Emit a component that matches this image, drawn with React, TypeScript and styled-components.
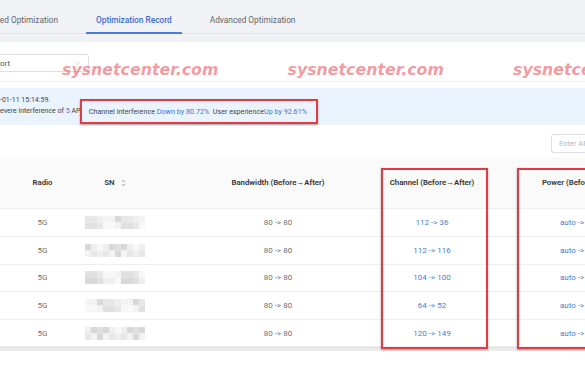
import styled, { createGlobalStyle } from "styled-components";
import { ChevronDown } from "lucide-react";

const GlobalStyle = createGlobalStyle`
  html, body { margin: 0; padding: 0; background: #fff; }
  body { font-family: Roboto, "Liberation Sans", sans-serif; }
`;

const Page = styled.div`
  position: relative;
  width: 585px;
  height: 390px;
  overflow: hidden;
  background: #fff;
`;

const TabBar = styled.div`
  width: 720px;
  height: 42px;
  background: #f0f2f5;
`;

const TabList = styled.div`
  display: flex;
  gap: 18px;
  height: 34px;
  box-sizing: border-box;
  border-bottom: 1px solid #e2e4e8;
`;

const Tab = styled.div<{ $active?: boolean; $clip?: boolean }>`
  display: flex;
  justify-content: flex-end;
  align-items: flex-start;
  box-sizing: border-box;
  height: 34px;
  margin-bottom: -1px;
  padding: 15px 10px 0;
  font-size: 8.3px;
  line-height: 10px;
  white-space: nowrap;
  color: ${(p) => (p.$active ? "#3d6dd2" : "#62666c")};
  font-weight: ${(p) => (p.$active ? 500 : 400)};
  border-bottom: 2px solid ${(p) => (p.$active ? "#4a7be0" : "transparent")};
  ${(p) => p.$clip && "width: 68px; flex-shrink: 0; overflow: hidden;"}
`;

const Content = styled.div`
  width: 720px;
  background: #fff;
`;

const FilterRow = styled.div`
  padding: 12px 0 9px;
  border-bottom: 1px solid #eeeff1;
`;

const Select = styled.div`
  width: 95px;
  height: 18px;
  margin-left: -6px;
  box-sizing: border-box;
  border: 1px solid #dcdfe6;
  border-radius: 3px;
  display: flex;
  align-items: center;
  justify-content: space-between;
  padding: 0 6px 0 5px;
  font-size: 8px;
  color: #555;
`;

const InfoBar = styled.div`
  margin-top: 6px;
  background: #eaf3fe;
  padding: 6.5px 0 8.5px;
  font-size: 7px;
  line-height: 11px;
  color: #444;
  white-space: nowrap;
`;

const Blue = styled.span`
  color: #3f74d6;
`;

const Callout = styled.span`
  display: inline-block;
  vertical-align: middle;
  margin: -7px 0 -7px -6px;
  padding: 5px 9px 5px 7px;
  background: #eaf3fe;
  border: 2px solid #df3d43;
  box-shadow: 0 1px 2px rgba(0, 0, 0, 0.35);
  font-size: 7.2px;
  line-height: 11px;
`;

const SearchRow = styled.div`
  display: flex;
  justify-content: flex-end;
  padding: 9px 19px 0 0;
`;

const Search = styled.div`
  width: 150px;
  height: 19px;
  box-sizing: border-box;
  border: 1px solid #dcdfe6;
  border-radius: 3px;
  padding-left: 7px;
  display: flex;
  align-items: center;
  font-size: 7.5px;
  color: #b5b8bd;
`;

const TableWrap = styled.div`
  position: relative;
  margin-top: 4px;
`;

const Row = styled.div<{ $head?: boolean }>`
  display: grid;
  grid-template-columns: 85px 60px 266px 42px 256px;
  height: ${(p) => (p.$head ? "52px" : "27.6px")};
  box-sizing: border-box;
  background: ${(p) => (p.$head ? "#fafafa" : "#fff")};
  border-bottom: 1px solid #eeeeee;
  font-size: ${(p) => (p.$head ? "7.8px" : "8px")};
  font-weight: ${(p) => (p.$head ? 600 : 400)};
  color: ${(p) => (p.$head ? "#333" : "#707070")};
`;

const Cell = styled.div<{ $blue?: boolean }>`
  display: flex;
  justify-content: center;
  align-items: center;
  white-space: nowrap;
  color: ${(p) => (p.$blue ? "#4a7bd3" : "inherit")};
`;

const TableEnd = styled.div`
  height: 3px;
  background: #ebebeb;
  border-top: 1px solid #e2e2e2;
`;

const Annotation = styled.div<{ $left: number; $width: number }>`
  position: absolute;
  top: 11px;
  left: ${(p) => p.$left}px;
  width: ${(p) => p.$width}px;
  height: 181px;
  box-sizing: border-box;
  border: 2px solid #df3d43;
  box-shadow: 0 1px 2px rgba(0, 0, 0, 0.35);
  pointer-events: none;
`;

const WatermarkLayer = styled.div`
  position: absolute;
  top: 60px;
  left: 62px;
  display: flex;
  pointer-events: none;
`;

const Watermark = styled.div`
  width: 225.5px;
  flex-shrink: 0;
  font-family: "DejaVu Sans", sans-serif;
  font-weight: bold;
  font-style: italic;
  font-size: 15.8px;
  line-height: 20px;
  color: rgba(232, 70, 80, 0.55);
  white-space: nowrap;
`;

const SortIcon = () => (
  <svg width="5" height="8" viewBox="0 0 5 8" style={{ marginLeft: 6 }}>
    <path d="M2.5 0.5 L4.5 3 H0.5 Z" fill="#c4c4c4" />
    <path d="M2.5 7.5 L4.5 5 H0.5 Z" fill="#c4c4c4" />
  </svg>
);

const shades = ["#f8f8f8", "#efefef", "#e7e7e7", "#e0e0e0", "#d8d8d8", "#f3f3f3"];

const Mosaic = ({ seed }: { seed: number }) => {
  const cells = [];
  for (let r = 0; r < 2; r++) {
    for (let c = 0; c < 10; c++) {
      const v = (seed * 7 + r * 13 + c * 5 + ((c * c + seed) % 3)) % shades.length;
      cells.push(<rect key={r + "-" + c} x={c * 7} y={r * 7.5} width="7" height="7.5" fill={shades[v]} />);
    }
  }
  return (
    <svg width="70" height="15" viewBox="0 0 70 15">
      {cells}
    </svg>
  );
};

const rows = [
  { ch: "112 -> 36" },
  { ch: "112 -> 116" },
  { ch: "104 -> 100" },
  { ch: "64 -> 52" },
  { ch: "120 -> 149" },
];

export default function App() {
  return (
    <Page>
      <GlobalStyle />
      <TabBar>
        <TabList>
          <Tab $clip>Achieved Optimization</Tab>
          <Tab $active>Optimization Record</Tab>
          <Tab>Advanced Optimization</Tab>
        </TabList>
      </TabBar>
      <Content>
        <FilterRow>
          <Select>
            <span>ort</span>
            <ChevronDown size={9} color="#b8bbc0" strokeWidth={1.5} />
          </Select>
        </FilterRow>
        <InfoBar>
          <div>-01-11 15:14:59.</div>
          <div>
            evere interference of <Blue>5</Blue> APs.
            <Callout>
              Channel interference <Blue>Down by 80.72%</Blue>&nbsp;&nbsp;User experience<Blue>Up by 92.61%</Blue>
            </Callout>
          </div>
        </InfoBar>
        <SearchRow>
          <Search>Enter AP name or SN</Search>
        </SearchRow>
        <TableWrap>
          <Row $head>
            <Cell>Radio</Cell>
            <Cell>
              SN
              <SortIcon />
            </Cell>
            <Cell>Bandwidth (Before→After)</Cell>
            <Cell>Channel (Before→After)</Cell>
            <Cell>Power (Before→After)</Cell>
          </Row>
          {rows.map((r, i) => (
            <Row key={i}>
              <Cell>5G</Cell>
              <Cell>
                <Mosaic seed={i + 1} />
              </Cell>
              <Cell>80 -&gt; 80</Cell>
              <Cell $blue>{r.ch}</Cell>
              <Cell $blue>auto -&gt; auto</Cell>
            </Row>
          ))}
          <TableEnd />
          <Annotation $left={381} $width={107} />
          <Annotation $left={517} $width={140} />
        </TableWrap>
      </Content>
      <WatermarkLayer>
        <Watermark>sysnetcenter.com</Watermark>
        <Watermark>sysnetcenter.com</Watermark>
        <Watermark>sysnetcenter.com</Watermark>
      </WatermarkLayer>
    </Page>
  );
}
